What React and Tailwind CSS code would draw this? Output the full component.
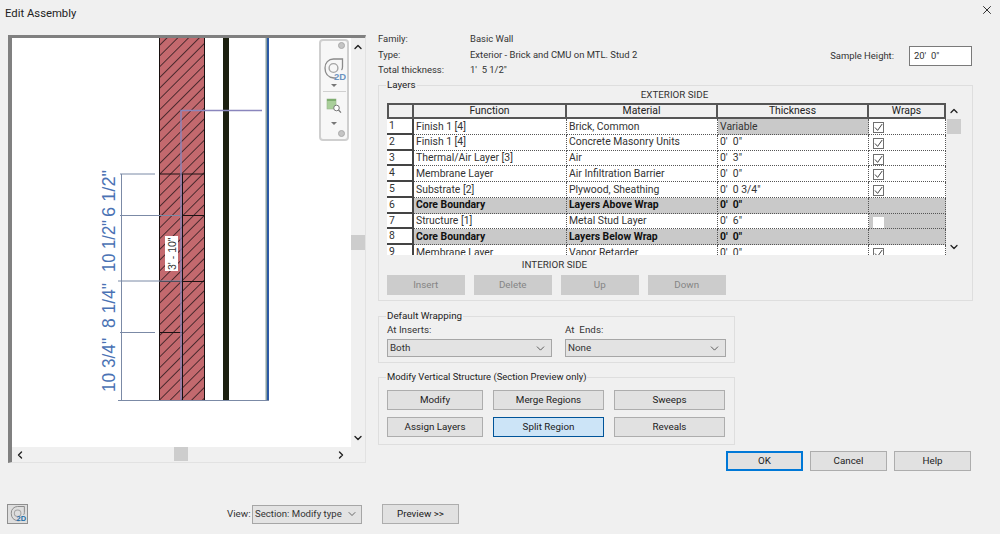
import React from "react";
import { ChevronUp, ChevronDown, ChevronLeft, ChevronRight, X } from "lucide-react";

const rows = [
  ["1", "Finish 1 [4]", "Brick, Common", "Variable", "on", "var"],
  ["2", "Finish 1 [4]", "Concrete Masonry Units", "0'  0\"", "on"],
  ["3", "Thermal/Air Layer [3]", "Air", "0'  3\"", "on"],
  ["4", "Membrane Layer", "Air Infiltration Barrier", "0'  0\"", "on"],
  ["5", "Substrate [2]", "Plywood, Sheathing", "0'  0 3/4\"", "on"],
  ["6", "Core Boundary", "Layers Above Wrap", "0'  0\"", "core"],
  ["7", "Structure [1]", "Metal Stud Layer", "0'  6\"", "off"],
  ["8", "Core Boundary", "Layers Below Wrap", "0'  0\"", "core"],
  ["9", "Membrane Layer", "Vapor Retarder", "0'  0\"", "on"],
];

function Check({ on }) {
  return (
    <svg width="11" height="11" viewBox="0 0 11 11" className="ml-[4px] mt-[3px] shrink-0">
      <rect x="0.5" y="0.5" width="10" height="10" fill="#fff" stroke={on ? "#6f6f6f" : "#fff"} />
      {on && <path d="M2 5.5 L4.6 8.4 L9.2 2" fill="none" stroke="#444" strokeWidth="1" />}
    </svg>
  );
}

function Row({ r }) {
  const core = r[4] === "core";
  const cell = "h-full flex items-center pl-[2px] pt-[1px] border-b border-r border-dotted border-b-[#555] border-r-[#555] whitespace-pre overflow-hidden";
  const bg = core ? "bg-[#c9c9c9] font-bold text-[#111]" : "bg-white";
  return (
    <div className="flex h-[15.75px] shrink-0">
      <div className="w-[27px] h-full pl-[2px] pt-[1px] flex items-center bg-white border-b-2 border-r-2 border-b-[#444] border-r-[#444]">{r[0]}</div>
      <div className={`w-[153px] ${cell} ${bg}`}>{r[1]}</div>
      <div className={`w-[151px] ${cell} ${bg}`}>{r[2]}</div>
      <div className={`w-[151px] ${cell} ${r[5] === "var" ? "bg-[#c9c9c9]" : bg}`}>{r[3]}</div>
      <div className={`w-[77px] h-full flex items-start border-b border-r border-dotted border-b-[#555] border-r-[#555] ${r[4] === "off" || core ? "bg-[#c9c9c9]" : "bg-white"}`}>
        {!core && <Check on={r[4] === "on"} />}
      </div>
    </div>
  );
}

function Head({ w, children }) {
  return (
    <div className={`${w} h-full flex items-center justify-center pt-[1px] bg-[#f0f0f0] border-t-2 border-b-2 border-r-2 border-[#555] text-[#222]`}>{children}</div>
  );
}

function Btn({ w, children, variant }) {
  const tone =
    variant === "disabled"
      ? "bg-[#cccccc] border-[#cccccc] text-[#858585]"
      : variant === "selected"
      ? "bg-[#cce4f7] border-[#005499] text-[#222]"
      : variant === "default"
      ? "bg-[#e1e1e1] border-2 border-[#0078d7] text-[#222]"
      : "bg-[#e1e1e1] border-[#adadad] text-[#222]";
  return <div className={`${w} h-[20px] flex items-center justify-center border ${tone}`}>{children}</div>;
}

function Select({ w, children }) {
  return (
    <div className={`${w} h-[18px] flex items-center justify-between pl-[2px] pr-[4px] bg-[#e3e3e3] border border-[#a6a6a6]`}>
      <span>{children}</span>
      <ChevronDown size={13} strokeWidth={1.4} color="#333" />
    </div>
  );
}

function Group({ legend, legendClass, className, children }) {
  return (
    <div className={`relative border border-[#dedede] ${className}`}>
      <span className={`absolute left-[7px] -top-[6px] px-[1px] bg-[#f0f0f0] text-[#222] ${legendClass || ""}`}>{legend}</span>
      {children}
    </div>
  );
}

function Icon2D({ small }) {
  return (
    <svg viewBox="0 0 24 24" width={small ? 18 : 24} height={small ? 18 : 24}>
      <path d="M3 11 a8.5 8.5 0 0 1 8.5 -9 h9 v8 q0 2 -1 3 M3 11 q0 9 9 10 h2" fill="none" stroke="#8b8b8b" strokeWidth="1.3" />
      <circle cx="11.5" cy="11" r="4.4" fill="none" stroke="#a5a5a5" strokeWidth="1.4" />
      <text x={small ? 10 : 12} y={small ? 21 : 23} fontSize={small ? 10 : 9.5} fontWeight="700" fill={small ? "#1f6ea8" : "#6b93c0"} fontFamily="Liberation Sans, sans-serif">2D</text>
    </svg>
  );
}

function Drawing() {
  return (
    <svg viewBox="12 38 339 409" width="339" height="409" className="block">
      <defs>
        <pattern id="hatch" width="7.6" height="7.6" patternUnits="userSpaceOnUse" patternTransform="rotate(45)">
          <rect width="7.6" height="7.6" fill="#c3696e" />
          <rect x="0" width="0.8" height="7.6" fill="#2e1a1e" />
        </pattern>
      </defs>
      <rect x="159" y="38" width="46" height="362" fill="url(#hatch)" />
      <path d="M159.5 38V400M204.5 38V400M182.5 174V400" stroke="#17100f" strokeWidth="1" fill="none" />
      <path d="M159 174H205M183 215.5H205M159 281.5H205M159 332.5H182" stroke="#1d1214" strokeWidth="1" fill="none" />
      <rect x="223" y="38" width="6" height="362" fill="#1c2010" />
      <rect x="265.5" y="38" width="1.5" height="362" fill="#8aa0a0" />
      <rect x="267" y="38" width="2" height="362" fill="#2c5aa5" />
      <path d="M181 400V110.5H262" fill="none" stroke="#8a86bd" strokeWidth="1.4" />
      <path d="M121.5 174V400M120 174H155M120 215.5H181M118 281H181M120 332.5H155M118 400.5H269" fill="none" stroke="#7b8aa6" strokeWidth="1" />
      <g fill="#4a72b4" fontFamily="Liberation Sans, sans-serif" fontSize="18">
        <text transform="translate(115 217) rotate(-90)" textLength="47" lengthAdjust="spacingAndGlyphs">6 1/2"</text>
        <text transform="translate(115 272) rotate(-90)" textLength="52" lengthAdjust="spacingAndGlyphs">10 1/2"</text>
        <text transform="translate(115 328) rotate(-90)" textLength="45" lengthAdjust="spacingAndGlyphs">8 1/4"</text>
        <text transform="translate(115 392) rotate(-90)" textLength="54" lengthAdjust="spacingAndGlyphs">10 3/4"</text>
      </g>
      <rect x="165" y="236" width="13" height="35" fill="#fff" />
      <text transform="translate(175.5 270) rotate(-90)" fontSize="10.5" fill="#333" fontFamily="Liberation Sans, sans-serif">3' - 10"</text>
    </svg>
  );
}

function NavBar() {
  const dot = "w-[7px] h-[7px] rounded-full bg-[#c4c4c4] border border-[#aaa] self-end mr-[2px]";
  const caret = <div className="w-0 h-0 border-l-[3px] border-r-[3px] border-t-[3px] border-l-transparent border-r-transparent border-t-[#777]" />;
  return (
    <div className="absolute left-[307px] top-[1px] w-[30px] h-[102px] rounded-[4px] bg-[#f7f7f7] border-2 border-[#cfcfcf] flex flex-col items-center pt-[1px]">
      <div className={dot} />
      <div className="mt-[8px]"><Icon2D /></div>
      <div className="mt-[3px]">{caret}</div>
      <div className="w-[23px] h-px bg-[#d0d0d0] mt-[4px]" />
      <svg width="16" height="16" viewBox="0 0 16 16" className="mt-[6px]">
        <rect x="1" y="1" width="9" height="10" fill="#a9cf9a" stroke="#9ab58e" strokeWidth="0.6" />
        <rect x="1" y="1" width="9" height="2" fill="#7fae70" />
        <circle cx="10.5" cy="10" r="2.8" fill="#fff" stroke="#777" strokeWidth="1" />
        <path d="M12.5 12 L15 14.6" stroke="#777" strokeWidth="1.2" />
      </svg>
      <div className="mt-[8px]">{caret}</div>
      <div className="flex-1" />
      <div className={`${dot} self-center mr-0 mb-[2px]`} />
    </div>
  );
}

function Preview() {
  return (
    <div className="w-[358px] h-[428px] flex flex-col border-t-[3px] border-l-[4px] border-t-[#808080] border-l-[#808080] border-r border-b border-r-[#e2e2e2] border-b-[#e2e2e2]">
      <div className="flex h-[409px]">
        <div className="relative w-[339px] h-[409px] bg-white">
          <Drawing />
          <NavBar />
        </div>
        <div className="w-[14px] h-full flex flex-col items-center justify-between py-[3px] relative">
          <ChevronUp size={12} strokeWidth={2.8} color="#222" />
          <div className="absolute left-0 top-[197px] w-[14px] h-[15px] bg-[#cdcdcd]" />
          <ChevronDown size={12} strokeWidth={2.8} color="#222" />
        </div>
      </div>
      <div className="h-[15px] w-[339px] flex items-center justify-between px-[1px] relative">
        <ChevronLeft size={12} strokeWidth={2.8} color="#222" className="ml-[1px]" />
        <div className="absolute left-[162px] top-0 w-[14px] h-[14px] bg-[#cdcdcd]" />
        <ChevronRight size={12} strokeWidth={2.8} color="#222" className="mr-[3px]" />
      </div>
    </div>
  );
}

export default function App() {
  return (
    <div className="w-[1000px] h-[534px] bg-[#f0f0f0] flex flex-col overflow-hidden text-[9.8px] leading-none text-[#333]" style={{ fontFamily: 'Roboto, "Open Sans", sans-serif' }}>
      <div className="h-[26px] flex items-center justify-between pl-[5px] pr-[6px] pt-[1px] text-[11.3px] text-[#222]">
        <span>Edit Assembly</span>
        <X size={14} strokeWidth={1.6} color="#222" className="mb-[8px]" />
      </div>
      <div className="flex flex-1">
        <div className="w-[378px] pl-[8px] pt-[9px] flex flex-col">
          <Preview />
          <div className="flex items-center mt-[41px] ml-[-1px] h-[20px]">
            <div className="w-[21px] h-[20px] flex items-center justify-center bg-[#dedede] border border-[#8f8f8f]"><Icon2D small /></div>
            <span className="ml-[199px] w-[25px]">View:</span>
            <div className="w-[110px] h-[19px] flex items-center justify-between pl-[2px] pr-[3px] bg-[#e3e3e3] border border-[#a6a6a6] whitespace-nowrap text-[9.6px]">
              <span>Section: Modify type</span>
              <ChevronDown size={12} strokeWidth={1.4} color="#333" />
            </div>
          </div>
        </div>
        <div className="w-[622px] pt-[4px] flex flex-col">
          <div className="flex h-[48px] w-[594px] justify-between whitespace-pre text-[9.45px]">
            <div className="flex flex-col pt-[1px]">
              {[["Family:", "Basic Wall"], ["Type:", "Exterior - Brick and CMU on MTL. Stud 2"], ["Total thickness:", "1'  5 1/2\""]].map((l) => (
                <div key={l[0]} className="flex h-[16px] items-center">
                  <span className="w-[92px]">{l[0]}</span>
                  <span>{l[1]}</span>
                </div>
              ))}
            </div>
            <div className="flex items-center h-[20px] mt-[16px]">
              <span className="mr-[15px]">Sample Height:</span>
              <div className="w-[63px] h-[20px] bg-white border border-[#7a7a7a] flex items-center pl-[4px]">20'  0"</div>
            </div>
          </div>
          <Group legend="Layers" className="mt-[7px] w-[595px] h-[216px] flex flex-col pl-[8px]">
            <div className="h-[17px] flex items-center justify-center pr-[10px] pt-[1px]">EXTERIOR SIDE</div>
            <div className="w-[575px] h-[152px] flex overflow-hidden bg-white text-[10.4px]">
              <div className="w-[559px] flex flex-col">
                <div className="flex h-[16px] shrink-0">
                  <div className="w-[27px] h-full bg-[#f0f0f0] border-2 border-[#555]" />
                  <Head w="w-[153px]">Function</Head>
                  <Head w="w-[151px]">Material</Head>
                  <Head w="w-[151px]">Thickness</Head>
                  <Head w="w-[77px]">Wraps</Head>
                </div>
                {rows.map((r) => <Row key={r[0]} r={r} />)}
              </div>
              <div className="w-[16px] bg-[#f0f0f0] flex flex-col items-center justify-between pt-[2px] pb-[2px] relative">
                <ChevronUp size={12} strokeWidth={2.6} color="#222" />
                <div className="absolute left-[1px] top-[16px] w-[14px] h-[15px] bg-[#cdcdcd]" />
                <ChevronDown size={12} strokeWidth={2.6} color="#222" />
              </div>
            </div>
            <div className="h-[20px] w-[335px] flex items-center justify-center">INTERIOR SIDE</div>
            <div className="flex gap-[9.5px] w-[339px]">
              {["Insert", "Delete", "Up", "Down"].map((b) => <Btn key={b} w="w-[77.5px]" variant="disabled">{b}</Btn>)}
            </div>
          </Group>
          <Group legend="Default Wrapping" className="mt-[15px] w-[357px] h-[47px] pl-[8px] pt-[8px] whitespace-pre">
            <div className="flex gap-[13px]">
              <div className="flex flex-col gap-[3px]">
                <span className="h-[11px]">At Inserts:</span>
                <Select w="w-[165px]">Both</Select>
              </div>
              <div className="flex flex-col gap-[3px]">
                <span className="h-[11px]">At  Ends:</span>
                <Select w="w-[161px]">None</Select>
              </div>
            </div>
          </Group>
          <div className="h-[14px]" />
          <Group legend="Modify Vertical Structure (Section Preview only)" legendClass="text-[9.45px]" className="w-[357px] h-[68px] pl-[8px] pt-[12px]">
            <div className="flex gap-[10px]">
              <Btn w="w-[96px]">Modify</Btn>
              <Btn w="w-[111px]">Merge Regions</Btn>
              <Btn w="w-[111px]">Sweeps</Btn>
            </div>
            <div className="flex gap-[10px] mt-[7px]">
              <Btn w="w-[96px]">Assign Layers</Btn>
              <Btn w="w-[111px]" variant="selected">Split Region</Btn>
              <Btn w="w-[111px]">Reveals</Btn>
            </div>
          </Group>
          <div className="flex gap-[7px] ml-[348px] mt-[6px]">
            <Btn w="w-[77px]" variant="default">OK</Btn>
            <Btn w="w-[77px]">Cancel</Btn>
            <Btn w="w-[77px]">Help</Btn>
          </div>
          <div className="ml-[4px] mt-[33px]">
            <Btn w="w-[77px]">Preview &gt;&gt;</Btn>
          </div>
        </div>
      </div>
    </div>
  );
}
